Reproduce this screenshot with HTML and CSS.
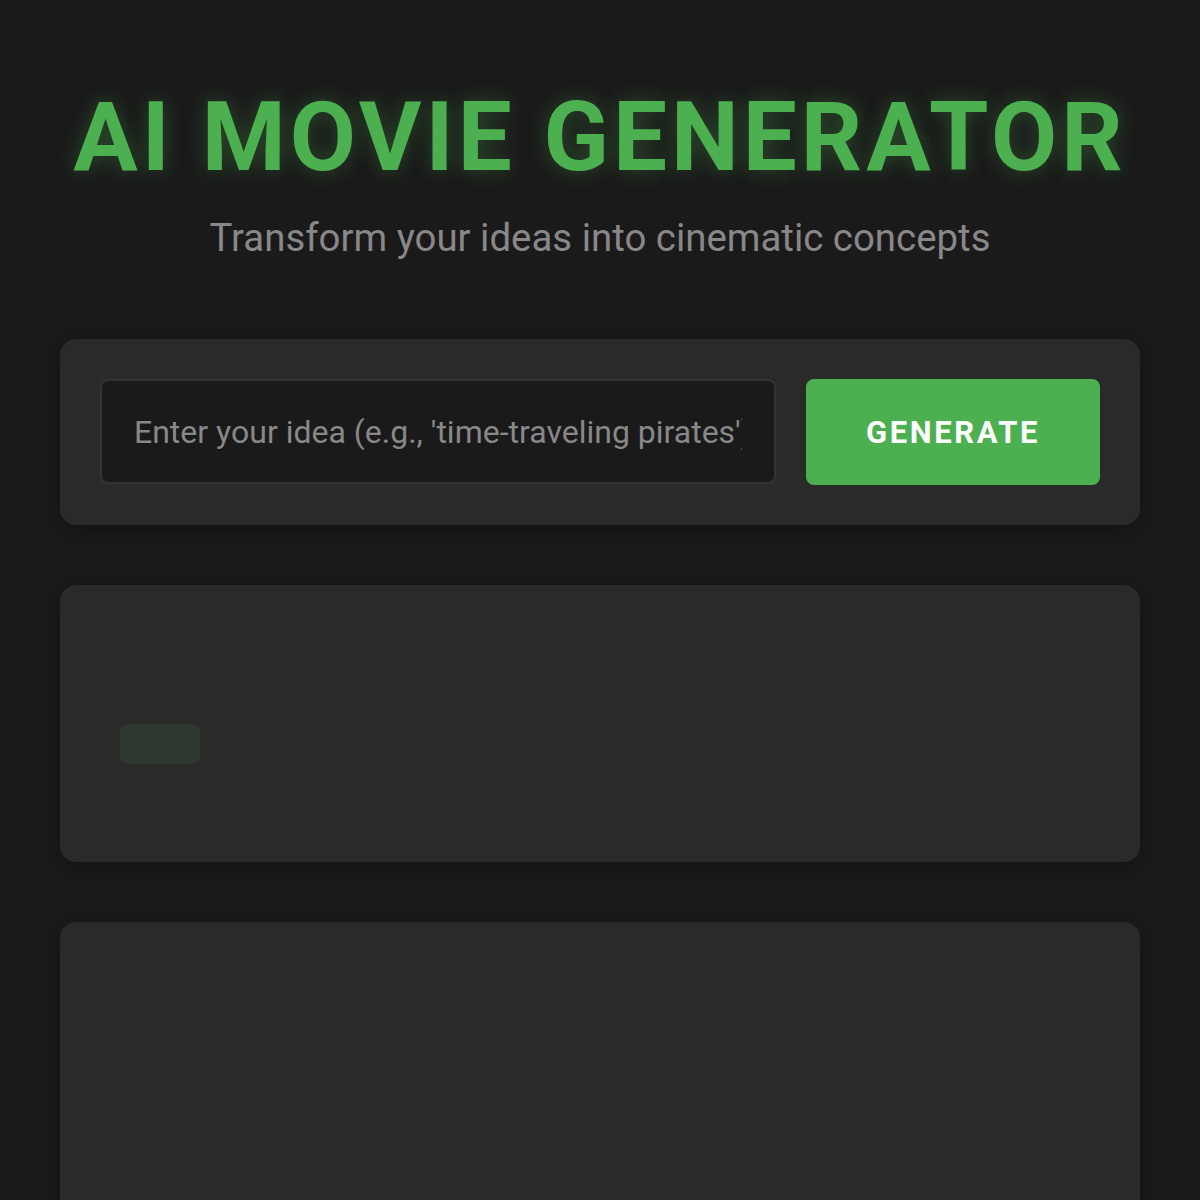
FILE: index.html
```html
<!DOCTYPE html>
<html lang="en">
<head>
<meta charset="utf-8">
<title>AI Movie Generator</title>
<link rel="stylesheet" href="styles.css">
</head>
<body>
<div class="container">
  <header class="header">
    <h1 class="title">AI MOVIE GENERATOR</h1>
    <p class="subtitle">Transform your ideas into cinematic concepts</p>
  </header>
  <section class="card input-card">
    <input class="idea-input" type="text" placeholder="Enter your idea (e.g., 'time-traveling pirates')">
    <button class="generate-btn">GENERATE</button>
  </section>
  <section class="card result-card">
    <span class="tag"></span>
  </section>
  <section class="card empty-card"></section>
</div>
</body>
</html>
```

FILE: styles.css
```css
* { box-sizing: border-box; }
html, body { margin: 0; padding: 0; }
body {
  background: #1a1a1a;
  color: #fff;
  font-family: Roboto, "Liberation Sans", sans-serif;
}
.container {
  padding: 0 60px;
}
.header {
  text-align: center;
  padding-top: 81px;
  margin-bottom: 78px;
}
.title {
  margin: 0;
  font-size: 96px;
  font-weight: 700;
  line-height: 112px;
  letter-spacing: 4px;
  color: #4caf50;
  text-shadow: 0 0 20px rgba(76, 175, 80, 0.35);
}
.subtitle {
  margin: 22px 0 0;
  font-size: 38.4px;
  line-height: 46px;
  color: #888;
}
.card {
  background: #2a2a2a;
  border-radius: 16px;
  box-shadow: 0 4px 20px rgba(0, 0, 0, 0.3);
  margin-bottom: 60px;
}
.input-card {
  display: flex;
  gap: 30px;
  padding: 40px;
}
.idea-input {
  flex: 1;
  min-width: 0;
  height: 105px;
  padding: 0 32px;
  background: #1a1a1a;
  border: 2px solid #333;
  border-radius: 8px;
  color: #fff;
  font-family: Roboto, "Liberation Sans", sans-serif;
  font-size: 32px;
  outline: none;
}
.idea-input::placeholder { color: #888; }
.generate-btn {
  width: 294px;
  height: 106px;
  background: #4caf50;
  border: none;
  border-radius: 8px;
  color: #fff;
  font-family: Roboto, "Liberation Sans", sans-serif;
  font-size: 31px;
  font-weight: 700;
  letter-spacing: 2.6px;
}
.result-card {
  padding: 139px 60px 98px;
}
.tag {
  display: block;
  width: 80px;
  height: 40px;
  border-radius: 8px;
  background: rgba(76, 175, 80, 0.12);
}
.empty-card {
  height: 400px;
}
```
